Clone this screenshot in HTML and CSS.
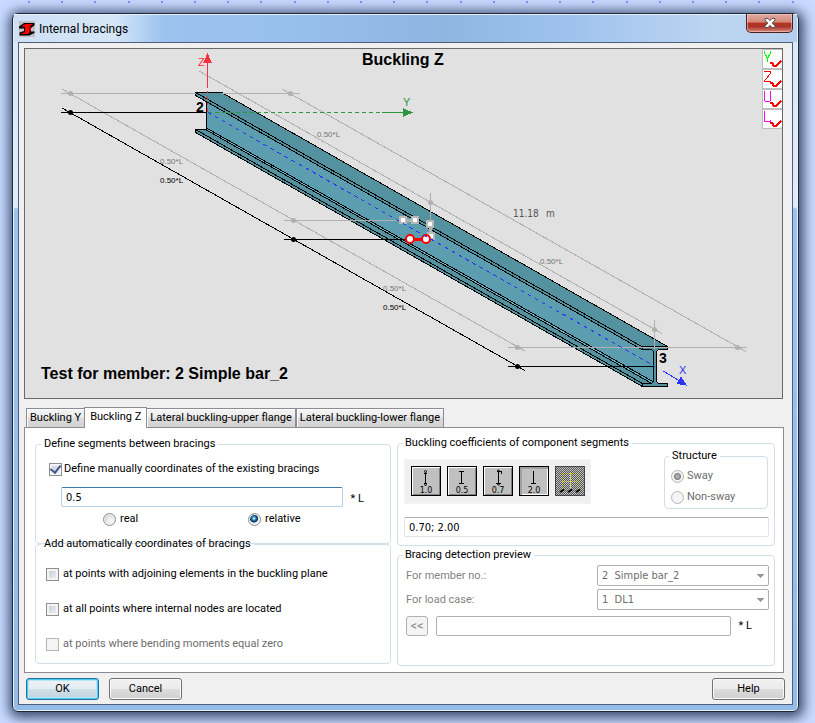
FILE: index.html
```html
<!DOCTYPE html>
<html lang="en">
<head>
<meta charset="utf-8">
<title>Internal bracings</title>
<link rel="stylesheet" href="styles.css">
</head>
<body>
<div class="dots" aria-hidden="true"><i></i><i></i><i></i><i></i><i></i><i></i><i></i><i></i><i></i><i></i><i></i><i></i><i></i><i></i><i></i><i></i><i></i><i></i><i></i><i></i><i></i><i></i><i></i><i></i></div>
<main class="window">
  <header class="titlebar">
    <svg class="app-icon" width="16" height="16" viewBox="0 0 16 16" aria-hidden="true">
      <rect width="16" height="16" fill="#c0c0c0"/>
      <path d="M0 5.500 5 2H15.500V4.500L12 7V10.500H15.500V12L10 14.500H.5V11.500L5 10V7.500H0Z" fill="#000"/>
      <path d="M2 5.500 6.500 3H14L10.500 5.500V12H6V5.500ZM2 12.500 6 11H11L9 13H2Z" fill="#f00"/>
      <path d="M10.500 6 12 5V10L10.500 11Z" fill="#a00"/>
    </svg>
    <h1>Internal bracings</h1>
    <button class="close" type="button" aria-label="Close">
      <svg width="12" height="10" viewBox="0 0 12 10"><path d="M1 .5H4L6 2.700 8 .5H11V2L8.200 5 11 8V9.500H8L6 7.300 4 9.500H1V8L3.800 5 1 2Z" fill="#fff" stroke="#555563"/></svg>
    </button>
  </header>

  <form class="client">
    <section class="view">
      <svg class="drawing" viewBox="25 49 757 349" role="img" aria-label="Member 2 buckling diagram">
        <g class="steel">
          <path class="flange" d="M195.500 92.500H221.500L667.500 346.500H642.500V350L195.500 95.500Z"/>
          <path class="web" d="M206.500 102 642.500 350H654.500V383L206.500 128Z"/>
          <path class="fillet" d="M206.500 128 653 382V384.500L205 130Z"/>
          <path class="flange" d="M205.500 129.500 653 384 643 386.500 195.500 132.500V129.500Z"/>
          <path class="edge" d="M195.500 92.500 642.500 347M195.500 95.500 642.500 350M206.500 102V128M206.500 128 653.500 382M205.500 129.500 651 383M195.500 129.500H205.500M195.500 129.500 642.500 383.500M195.500 132.500 642.500 386.500M195.500 129.500V132.500"/>
          <path class="edge" d="M195.500 92.500H221.500L667.500 346.500M195.500 92.500V95.500"/>
          <path class="flange edge" d="M642.500 346.500H667.500V349.500H660Q656.500 349.500 656.500 353V380Q656.500 383.500 660 383.500H667.500V386.500H642.500V383.500H650Q653.500 383.500 653.500 380V353Q653.500 349.500 650 349.500H642.500Z"/>
        </g>
        <g class="guide">
          <path d="M61 93.500H196M222 93.500H300M62 89 525 351M282 89 746 351.500M199 71 662 333.500M284 220.500H400M508 347.500H747M430.500 193V240M654.500 320V349"/>
          <g class="knot">
            <circle cx="70.500" cy="93.500" r="2.500"/><circle cx="290.500" cy="93.500" r="2.500"/>
            <circle cx="293.500" cy="220.500" r="2.500"/><circle cx="430.500" cy="202.500" r="2.500"/>
            <circle cx="517.500" cy="347.500" r="2.500"/><circle cx="654.500" cy="329.500" r="2.500"/>
            <circle cx="737.500" cy="347.500" r="2.500"/>
          </g>
          <path class="link" d="M403 220.500H416M430.500 224V236"/>
          <g class="hole">
            <rect x="400" y="217" width="6" height="6"/><rect x="412" y="217" width="6" height="6"/>
            <rect x="428" y="233" width="6" height="6"/><rect x="427" y="221" width="6" height="6"/>
          </g>
        </g>
        <g class="main">
          <path d="M61 112.500H207M62 108 525 370.500M284 239.500H408M508 366.500H655"/>
          <circle cx="70.500" cy="112.500" r="2.500"/><circle cx="293.500" cy="239.500" r="2.500"/><circle cx="517.500" cy="366.500" r="2.500"/>
        </g>
        <g class="active">
          <path d="M410 239.500H426"/><circle cx="410" cy="239" r="4"/><circle cx="426" cy="239" r="4"/>
        </g>
        <g class="axis-z"><path d="M207.500 112V85" stroke-dasharray="4 3 2 3"/><path d="M207.500 85V62"/><path d="M207.500 54 211 62.500H204Z"/><text x="198" y="66">Z</text></g>
        <g class="axis-y"><path d="M208 112.500H382" stroke-dasharray="4 3"/><path d="M382 112.500H404"/><path d="M412 112.500 403.500 109V116Z"/><text x="403" y="106">Y</text></g>
        <g class="axis-x"><path d="M208 112.500 655 366.500" stroke-dasharray="4 4"/><path d="M663 371 680 381"/><path d="M686 385 677.500 383.500 681 377.500Z"/><text x="679" y="374">X</text></g>
        <g class="node"><text x="196" y="112">2</text><text x="659" y="363">3</text></g>
        <g class="coef dim"><text x="160" y="164">0.50*L</text><text x="317" y="137">0.50*L</text><text x="383" y="291">0.50*L</text><text x="540" y="264">0.50*L</text></g>
        <g class="coef"><text x="160" y="183">0.50*L</text><text x="383" y="310">0.50*L</text></g>
        <g class="length"><text x="513" y="217">11.18</text><text x="546" y="217">m</text></g>
        <text class="caption" x="362" y="65">Buckling Z</text>
        <text class="subject" x="41" y="379">Test for member: 2 Simple bar_2</text>
      </svg>
      <div class="toggles">
        <button type="button" aria-label="Buckling Y"><svg viewBox="0 0 19 18"><path d="M1.500 1V4M2.500 4V6M3.500 5V8M4.500 7V12M7.500 1V4M6.500 4V6M5.500 5V8" stroke="#0f0"/><path class="tick" d="M7 13H9L11 16H13L18 11"/></svg></button>
        <button type="button" aria-label="Buckling Z"><svg viewBox="0 0 19 18"><path d="M1 1.500H8M7.500 2V4M6.500 4V5M5.500 5V7M4.500 6V8M3.500 8V9M2.500 9V10M1.500 10V11M1 11.500H8" stroke="#f00"/><path class="tick" d="M7 13H9L11 16H13L18 11"/></svg></button>
        <button type="button" aria-label="Upper flange"><svg viewBox="0 0 19 18"><path d="M1.500 1V11M2 11.500H7M7.500 11V1" stroke="#f0f"/><path class="tick" d="M7 13H9L11 16H13L18 11"/></svg></button>
        <button type="button" aria-label="Lower flange"><svg viewBox="0 0 19 18"><path d="M1.500 1V12M1 11.500H8M7.500 10V12" stroke="#f0f"/><path class="tick" d="M7 13H9L11 16H13L18 11"/></svg></button>
      </div>
    </section>

    <nav class="tabs" role="tablist">
      <button type="button" role="tab">Buckling Y</button>
      <button type="button" role="tab" class="current" aria-selected="true">Buckling Z</button>
      <button type="button" role="tab">Lateral buckling-upper flange</button>
      <button type="button" role="tab">Lateral buckling-lower flange</button>
    </nav>

    <div class="panel">
      <div class="column">
        <fieldset class="segments">
          <legend>Define segments between bracings</legend>
          <label class="option"><input type="checkbox" checked>Define manually coordinates of the existing bracings</label>
          <div class="coords"><input class="field focus" type="text" value="0.5" aria-label="Coordinates"><span>* L</span></div>
          <div class="kinds">
            <label class="option"><input type="radio" name="kind">real</label>
            <label class="option"><input type="radio" name="kind" checked>relative</label>
          </div>
        </fieldset>
        <fieldset class="auto">
          <legend>Add automatically coordinates of bracings</legend>
          <label class="option"><input type="checkbox">at points with adjoining elements in the buckling plane</label>
          <label class="option"><input type="checkbox">at all points where internal nodes are located</label>
          <label class="option off"><input type="checkbox" disabled>at points where bending moments equal zero</label>
        </fieldset>
      </div>

      <div class="column">
        <fieldset class="coefficients">
          <legend>Buckling coefficients of component segments</legend>
          <div class="choices">
            <div class="toolbar">
              <button type="button" aria-label="Pinned both ends"><svg viewBox="0 0 28 28"><path d="M13.500 6V16M12 16.500H15M12 6.500H15"/><circle cx="13.500" cy="4.500" r="1"/><circle cx="13.500" cy="17.500" r="1"/><text x="14" y="26">1.0</text></svg></button>
              <button type="button" aria-label="Fixed both ends"><svg viewBox="0 0 28 28"><path d="M13.500 5V17M11 4.500H16M11 16.500H16"/><text x="14" y="26">0.5</text></svg></button>
              <button type="button" aria-label="Fixed and pinned"><svg viewBox="0 0 28 28"><path d="M14.500 5V16M13 4.500H17M17.500 4V7M12 16.500H17"/><circle cx="14.500" cy="4" r="1"/><circle cx="14.500" cy="17" r="1"/><text x="14" y="26">0.7</text></svg></button>
              <button type="button" class="pressed" aria-label="Cantilever"><svg viewBox="0 0 28 28"><path d="M13.500 4V16M11 16.500H16"/><text x="14" y="26">2.0</text></svg></button>
              <button type="button" class="frame" aria-label="Frame"><svg viewBox="0 0 30 30"><defs><pattern id="mesh" width="2" height="2" patternUnits="userSpaceOnUse"><path class="mesh-light" d="M0 0H2V2H0Z"/><path class="mesh-dark" d="M0 0H1V1H0ZM1 1H2V2H1Z"/></pattern></defs><rect class="ground" width="30" height="30" fill="url(#mesh)"/><rect class="dotted" x=".5" y=".5" width="29" height="29"/><path class="grid" d="M7.500 23V7.500H23.500V23M7.500 15.500H23.500M15.500 7V23"/><path class="foot" d="M5 26 9 23.500M13 26 17 23.500M21 26 25 23.500"/></svg></button>
            </div>
            <fieldset class="structure">
              <legend>Structure</legend>
              <label class="option off"><input type="radio" name="structure" checked disabled>Sway</label>
              <label class="option off"><input type="radio" name="structure" disabled>Non-sway</label>
            </fieldset>
          </div>
          <input class="field" type="text" value="0.70; 2.00" aria-label="Coefficients">
        </fieldset>
        <fieldset class="preview">
          <legend>Bracing detection preview</legend>
          <div class="row"><label for="member">For member no.:</label><select id="member" disabled><option>2&nbsp; Simple bar_2</option></select></div>
          <div class="row"><label for="load">For load case:</label><select id="load" disabled><option>1&nbsp; DL1</option></select></div>
          <div class="detect"><button type="button" disabled>&lt;&lt;</button><input class="field gray" type="text" aria-label="Detected coordinates"><span>* L</span></div>
        </fieldset>
      </div>
    </div>

    <footer class="actions">
      <button type="button" class="default">OK</button>
      <button type="button">Cancel</button>
      <button type="button" class="help">Help</button>
    </footer>
  </form>
</main>
</body>
</html>
```
FILE: styles.css
```css
* { box-sizing: border-box; }

body {
  margin: 0;
  min-height: 100vh;
  padding: 13px 16px 11px 12px;
  background: #c8daff;
  font: 11px/16px Roboto, "Noto Sans", sans-serif;
  color: #000;
}

button, input, select { font: inherit; color: inherit; margin: 0; }

.dots {
  position: absolute;
  top: 1px;
  left: 28px;
  right: 21px;
  display: flex;
  justify-content: space-between;
}
.dots i { width: 2px; height: 2px; background: #8c90fa; }

/* window frame */
.window {
  position: relative;
  padding: 0 5px 6px;
  border: 1px solid #1d2735;
  border-radius: 6px;
  background: linear-gradient(#d8e8fa 0, #dfecfb 193px, #9cc4f2 195px, #94bce8 100%);
  box-shadow: inset 0 0 0 1px #e6f2ff, 1px 2px 12px 4px rgba(30, 45, 80, .8);
}

.titlebar {
  display: flex;
  align-items: center;
  height: 28px;
  margin: 0 -4px;
  padding-left: 5px;
  border-top: 1px solid #e6f2ff;
  background: linear-gradient(90deg, #cfe0f5 0, #d6e6f8 100px, #9cc2ee 150px, #98c0ef 270px, #8fb5e1 430px, #9fc3ee 560px, #bcd5f1 700px, #b4cfee 100%);
}
.titlebar h1 { margin: 0 0 0 4px; font: 12px/16px Roboto, "Noto Sans", sans-serif; }
.close {
  align-self: flex-start;
  display: grid;
  place-items: center;
  width: 47px;
  height: 19px;
  margin: -1px 4px 0 auto;
  padding: 0;
  border: 1px solid #4d1f24;
  border-top: 0;
  border-radius: 0 0 5px 5px;
  background: linear-gradient(#e3a99f 0, #d2897c 45%, #b73320 50%, #a9342a 70%, #d88a7c 100%);
  box-shadow: inset 0 0 0 1px rgba(255, 220, 210, .5);
}

.client {
  padding: 5px 5px 4px;
  border: 1px solid #4f5f7a;
  background: #f0f0f0;
}

/* member drawing */
.view { position: relative; margin-right: 4px; border: 1px solid #696969; background: #e1e1e1; }
.drawing { display: block; width: 100%; height: auto; font-family: "Liberation Sans", sans-serif; }
.drawing path { shape-rendering: crispEdges; }
.flange { fill: #5592a0; }
.web { fill: #5c9db0; }
.fillet { fill: #6bb4c8; }
.edge { stroke: #000; }
path.edge:not(.flange) { fill: none; }
.guide path { stroke: #b0b0b0; fill: none; }
.guide .link { stroke-width: 3; }
.knot { fill: #b0b0b0; }
.hole { fill: #fff; stroke: #b8b8b8; stroke-width: 2; }
.main path { stroke: #000; fill: none; }
.active path { stroke: #f00; stroke-width: 3; }
.active circle { fill: #fff; stroke: #f00; stroke-width: 2; }
.axis-z { stroke: #f6313c; fill: #f6313c; }
.axis-y { stroke: #2e9640; fill: #2e9640; }
.axis-x { stroke: #2a35f5; fill: #2a35f5; }
.axis-x text, .axis-y text, .axis-z text { stroke: none; font-size: 11px; }
.node text { font-size: 14px; font-weight: bold; }
.coef { font-size: 8px; }
.dim { fill: #777; }
.length { font: 10px "DejaVu Sans Condensed", sans-serif; fill: #555; }
.caption { font-size: 16px; font-weight: bold; }
.subject { font-size: 16px; font-weight: bold; }

.toggles { position: absolute; top: 0; right: 0; display: grid; }
.toggles button { width: 20px; height: 20px; padding: 0; border: 1px solid #bdbdbd; border-right: 0; background: #fff; }
.toggles svg { display: block; width: 19px; height: 18px; fill: none; stroke-width: 1; shape-rendering: crispEdges; }
.toggles .tick { stroke: #f00; stroke-width: 2; }

/* tabs */
.tabs { display: flex; align-items: flex-end; height: 20px; margin: 8px 0 0 2px; }
.tabs button {
  height: 19px;
  padding: 0 3px;
  border: 1px solid #8c8c96;
  border-bottom: 0;
  background: linear-gradient(#f4f4f4 0, #ececec 45%, #dcdcdc 50%, #d2d2d2 100%);
  box-shadow: inset 1px 1px 0 #fff;
  white-space: nowrap;
}
.tabs button:first-child { border-right: 0; }
.tabs .current { position: relative; height: 21px; margin-bottom: -1px; padding: 0 5px 2px; background: #fff; }
.tabs .current + button { border-left: 0; }

.panel {
  display: grid;
  grid-template-columns: 356fr 378fr;
  gap: 6px;
  margin-right: 3px;
  padding: 7px 8px 6px 10px;
  border: 1px solid #8c8c96;
  background: #fff;
}
.column { min-width: 0; }

fieldset { display: flex; flex-direction: column; min-width: 0; margin: 0; padding: 0; border: 1px solid #d3dfe8; border-radius: 4px; }
legend { padding: 0 3px; margin-left: 5px; height: 16px; }

.option { display: flex; align-items: center; gap: 2px; height: 16px; }
.off { color: #6d6d6d; }
.option input { appearance: none; flex: none; width: 13px; height: 13px; border: 1px solid #8e8f8f; }
.option input[type=checkbox] { background: linear-gradient(135deg, #c4c9d0, #f4f5f6); box-shadow: inset 0 0 0 2px #f4f4f4; }
.option input[type=checkbox]:checked { display: grid; place-content: center; }
.option input[type=checkbox]:checked::after {
  content: "";
  width: 5px;
  height: 8px;
  margin-bottom: 2px;
  border: solid #3f5591;
  border-width: 0 2px 2px 0;
  transform: rotate(38deg);
}
.option input[type=radio] { border-radius: 50%; background: radial-gradient(circle at 60% 60%, #f4f4f4 0 20%, #c9cdd2 75%); box-shadow: inset 0 0 0 1px #f4f4f4; }
.option input[type=radio]:checked { background: radial-gradient(circle at 45% 40%, #9fdcf5 0 8%, #1b6fa5 25%, #0d2f4d 42%, #e8eef2 50%); }
.option input:disabled { border-color: #b5b5b5; background: #f6f6f6; }
.option input[type=radio]:checked:disabled { background: radial-gradient(circle, #b5b5b5 0 10%, #838383 40%, #f0f0f0 50%); }

.field { min-width: 0; height: 20px; padding: 0 4px; border: 1px solid #e2e3ea; border-top-color: #abadb3; border-radius: 2px; background: #fff; font-family: "DejaVu Sans Condensed", sans-serif; }
.focus { border-color: #b5cfe7; border-top-color: #3d7bad; }
.gray { border-color: #afafaf; }

.segments { height: 108px; padding: 9px 0 0 13px; margin-top: 1px; }
.coords { display: flex; align-items: center; gap: 8px; margin: 10px 26px 0 12px; }
.coords .field { flex: 1; }
.coords span { padding-top: 3px; }
.kinds { display: grid; grid-template-columns: 145px 1fr; margin: 4px 0 0 54px; }
.kinds .option { gap: 4px; }

.auto { gap: 19px; height: 128px; margin-top: -8px; padding: 14px 0 0 10px; }
.auto legend { margin-left: -5px; }
.segments legend { margin-left: -8px; }
.auto .option { gap: 4px; }

.coefficients { height: 111px; padding: 8px 5px 8px 6px; }
.coefficients > legend { margin-left: -2px; }
.choices { display: flex; justify-content: space-between; align-items: flex-start; }
.toolbar { display: flex; gap: 6px; padding: 6px 5px 7px 6px; border: 1px solid #f4f4f4; background: #f0f0f0; }
.toolbar button { width: 30px; height: 30px; padding: 0; border: 1px solid #000; background: #c0c0c0; box-shadow: inset 1px 1px 0 #fff, inset -1px -1px 0 #808080; }
.toolbar .pressed { box-shadow: inset 2px 2px 0 #a0a0a0, inset -1px -1px 0 #fff; }
.toolbar .frame { border: 0; box-shadow: none; }
.toolbar svg { display: block; width: 100%; height: 100%; fill: none; stroke: #000; }
.toolbar text { fill: #000; stroke: none; font: 8px "DejaVu Sans", sans-serif; text-anchor: middle; }
.toolbar .ground { stroke: none; }
.mesh-light { fill: #c0c0c0; stroke: none; }
.mesh-dark { fill: #585858; stroke: none; }
.toolbar .dotted { stroke-dasharray: 1 1; }
.toolbar .grid { stroke: #e8e23c; stroke-dasharray: 1 1; }
.toolbar .foot { stroke-width: 2; }
.structure { width: 104px; height: 61px; margin: -11px 1px 0 0; padding: 4px 0 0 6px; gap: 5px; }
.structure legend { margin-left: -2px; }
.structure .option { gap: 3px; }
.coefficients .field { margin-top: auto; }

.preview { height: 119px; margin-top: 1px; padding: 2px 5px 0 8px; }
.preview legend { margin-left: -4px; }
.row { display: grid; grid-template-columns: 191px 1fr; align-items: center; margin-bottom: 3px; color: #838383; }
.row select {
  appearance: none;
  height: 21px;
  padding: 0 4px;
  border: 1px solid #afafaf;
  border-radius: 2px;
  color: #6d6d6d;
  opacity: 1;
  background: conic-gradient(from 315deg at 50% 100%, #999 90deg, transparent 0) right 4px top 8px / 8px 4px no-repeat, #fff;
  font-family: "DejaVu Sans Condensed", sans-serif;
}
.detect { display: flex; align-items: center; gap: 8px; margin: 3px 17px 0 0; }
.detect button { width: 22px; height: 20px; padding: 0; border: 1px solid #adb2b5; border-radius: 3px; background: #f4f4f4; color: #838383; font-size: 13px; }
.detect .field { flex: 1; }

.actions { display: flex; gap: 10px; margin-top: 5px; padding: 0 2px; }
.actions button { width: 73px; height: 22px; padding: 0; border: 1px solid #707070; border-radius: 3px; background: linear-gradient(#f2f2f2 0, #ebebeb 48%, #dddddd 50%, #cfcfcf 100%); box-shadow: inset 0 0 0 1px #fafafa; }
.actions .default { border-color: #2f6c9c; box-shadow: inset 0 0 0 1px #45cdf5, inset 0 0 0 2px #b9e6f7; background: linear-gradient(#edf3f6 0, #e4edf2 48%, #cfdfe8 50%, #c2d4de 100%); }
.actions .help { margin-left: auto; }
```
